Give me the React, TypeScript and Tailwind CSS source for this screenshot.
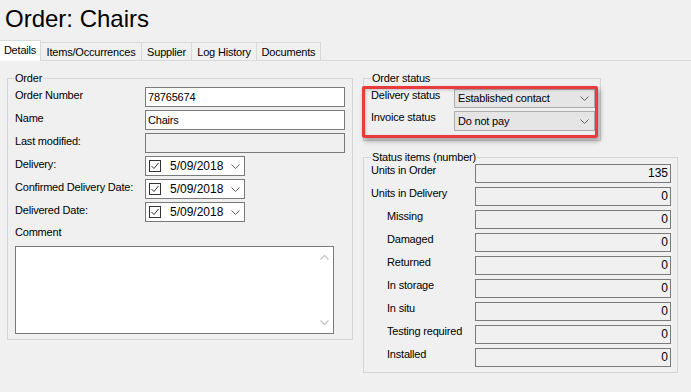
import React from 'react';

const tabs = [
  { label: 'Details', w: 'w-[41px]', active: true },
  { label: 'Items/Occurrences', w: 'w-[101px]' },
  { label: 'Supplier', w: 'w-[50px]' },
  { label: 'Log History', w: 'w-[65px]' },
  { label: 'Documents', w: 'w-[64px]' },
];

const statusItems = [
  { label: 'Units in Order', value: '135' },
  { label: 'Units in Delivery', value: '0' },
  { label: 'Missing', value: '0', indent: true },
  { label: 'Damaged', value: '0', indent: true },
  { label: 'Returned', value: '0', indent: true },
  { label: 'In storage', value: '0', indent: true },
  { label: 'In situ', value: '0', indent: true },
  { label: 'Testing required', value: '0', indent: true },
  { label: 'Installed', value: '0', indent: true },
];

function Chevron() {
  return (
    <svg width="9" height="5" viewBox="0 0 9 5" className="shrink-0">
      <path d="M0.5 0.5 L4.5 4.5 L8.5 0.5" fill="none" stroke="#606060" strokeWidth="1" />
    </svg>
  );
}

function DateField() {
  return (
    <div className="flex items-center w-[100px] h-[20px] border border-[#7a7a7a] bg-white">
      <div className="ml-[3px] w-[12px] h-[12px] border border-[#333] flex items-center justify-center">
        <svg width="10" height="10" viewBox="0 0 10 10">
          <path d="M1.5 5 L4 7.5 L8.5 2" fill="none" stroke="#333" strokeWidth="1" />
        </svg>
      </div>
      <span className="ml-[9px] text-[12px] leading-[14px] tracking-normal">5/09/2018</span>
      <span className="ml-auto mr-[4px]">
        <Chevron />
      </span>
    </div>
  );
}

function Combo({ value, tall }: { value: string; tall?: boolean }) {
  return (
    <div
      className={`flex items-center w-[141px] ${tall ? 'h-[20px]' : 'h-[19px]'} border border-[#adadad] bg-[#e5e5e5] pl-[3px] pr-[5px]`}
    >
      <span>{value}</span>
      <span className="ml-auto">
        <Chevron />
      </span>
    </div>
  );
}

export default function App() {
  return (
    <div className="relative w-[691px] h-[392px] overflow-hidden bg-[#f0f0f0] text-black text-[11px] leading-[13px] tracking-[-0.2px] font-['Liberation_Sans',Arial,sans-serif]">
      <h1 className="h-[40px] pl-[5px] pt-[5px] text-[24px] leading-[28px] tracking-normal">Order: Chairs</h1>

      {/* tab strip */}
      <div className="flex items-end h-[21px] border-b border-[#d9d9d9]">
        {tabs.map((t) =>
          t.active ? (
            <div
              key={t.label}
              className={`${t.w} h-[21px] -mb-px pt-[3px] bg-white border border-b-0 border-l-0 border-[#d9d9d9] text-center`}
            >
              {t.label}
            </div>
          ) : (
            <div
              key={t.label}
              className={`${t.w} h-[18px] pt-[3px] border border-b-0 border-l-0 border-[#d9d9d9] text-center`}
            >
              {t.label}
            </div>
          )
        )}
      </div>

      <div className="flex items-start">
        {/* Order group */}
        <fieldset className="ml-[7px] mt-[11px] w-[346px] h-[268px] border border-[#d5d5d5]">
          <legend className="ml-[6px] px-px leading-[13px]">Order</legend>
          <div className="pt-[2px]">
            <div className="flex h-[23px]">
              <div className="w-[137px] pl-[7px] pt-[2px]">Order Number</div>
              <div className="flex items-center w-[200px] h-[20px] border border-[#7a7a7a] bg-white pl-[2px]">78765674</div>
            </div>
            <div className="flex h-[23px]">
              <div className="w-[137px] pl-[7px] pt-[2px]">Name</div>
              <div className="flex items-center w-[200px] h-[20px] border border-[#7a7a7a] bg-white pl-[2px]">Chairs</div>
            </div>
            <div className="flex h-[23px]">
              <div className="w-[137px] pl-[7px] pt-[2px]">Last modified:</div>
              <div className="w-[200px] h-[20px] border border-[#7a7a7a] bg-[#f0f0f0]" />
            </div>
            <div className="flex h-[23px]">
              <div className="w-[137px] pl-[7px] pt-[2px]">Delivery:</div>
              <DateField />
            </div>
            <div className="flex h-[23px]">
              <div className="w-[137px] pl-[7px] pt-[2px]">Confirmed Delivery Date:</div>
              <DateField />
            </div>
            <div className="flex h-[23px]">
              <div className="w-[137px] pl-[7px] pt-[2px]">Delivered Date:</div>
              <DateField />
            </div>
            <div className="h-[21px] pl-[7px] pt-px">Comment</div>
            <div className="ml-[7px] flex justify-end w-[319px] h-[88px] border border-[#7a7a7a] bg-white">
              <div className="w-[17px] flex flex-col items-center justify-between py-[8px]">
                <svg width="9" height="5" viewBox="0 0 9 5">
                  <path d="M0.5 4.5 L4.5 0.5 L8.5 4.5" fill="none" stroke="#c4c4c4" strokeWidth="1.2" />
                </svg>
                <svg width="9" height="5" viewBox="0 0 9 5">
                  <path d="M0.5 0.5 L4.5 4.5 L8.5 0.5" fill="none" stroke="#c4c4c4" strokeWidth="1.2" />
                </svg>
              </div>
            </div>
          </div>
        </fieldset>

        {/* right column */}
        <div className="ml-[10px] flex flex-col">
          <fieldset className="mt-[11px] w-[238px] h-[69px] border border-[#d5d5d5]">
            <legend className="ml-[7px] px-px leading-[13px]">Order status</legend>
            <div className="pt-[4px]">
              <div className="flex h-[22px]">
                <div className="w-[90px] pl-[7px]">Delivery status</div>
                <Combo value="Established contact" />
              </div>
              <div className="flex h-[22px]">
                <div className="w-[90px] pl-[7px]">Invoice status</div>
                <Combo value="Do not pay" tall />
              </div>
            </div>
          </fieldset>

          <fieldset className="mt-[10px] w-[315px] h-[222px] border border-[#d5d5d5]">
            <legend className="ml-[7px] px-px leading-[13px]">Status items (number)</legend>
            {statusItems.map((s) => (
              <div key={s.label} className="flex h-[23px]">
                <div className={`w-[111px] ${s.indent ? 'pl-[23px]' : 'pl-[7px]'}`}>{s.label}</div>
                <div className="flex items-center justify-end w-[196px] h-[19px] border border-[#7a7a7a] bg-[#f0f0f0] pr-[2px] text-[12px] tracking-normal">
                  {s.value}
                </div>
              </div>
            ))}
          </fieldset>
        </div>
      </div>

      {/* highlight annotation */}
      <div className="absolute left-[362px] top-[86px] w-[236px] h-[52px] border-[3px] border-[#ea3a3e] rounded-[2px] shadow-[2px_3px_5px_rgba(0,0,0,0.35),inset_1px_1px_3px_rgba(0,0,0,0.2)]" />
    </div>
  );
}
